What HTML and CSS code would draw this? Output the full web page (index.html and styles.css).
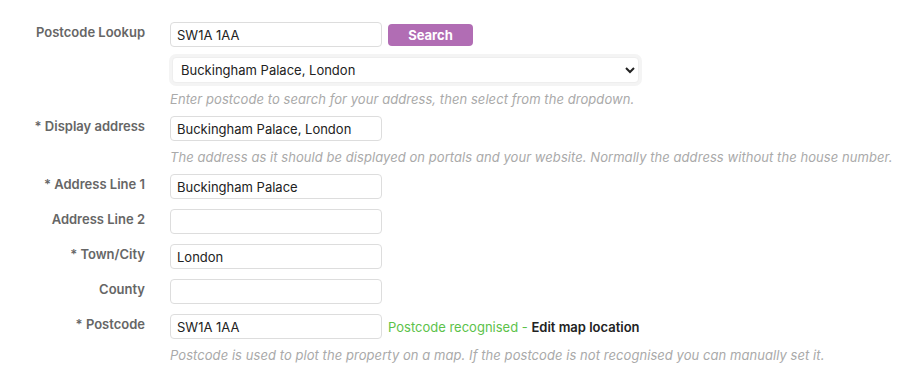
FILE: index.html
```html
<!DOCTYPE html>
<html lang="en">
<head>
    <meta charset="UTF-8">
    <title>Property address</title>
    <link rel="stylesheet" href="styles.css">
</head>
<body>
    <div class="form">
        <div class="row">
            <label for="lookup">Postcode Lookup</label>
            <div class="field">
                <div class="inline">
                    <input type="text" id="lookup" value="SW1A 1AA">
                    <button type="button">Search</button>
                </div>
                <select class="address-select">
                    <option>Buckingham Palace, London</option>
                </select>
                <p class="help">Enter postcode to search for your address, then select from the dropdown.</p>
            </div>
        </div>

        <div class="row">
            <label for="display">* Display address</label>
            <div class="field">
                <input type="text" id="display" value="Buckingham Palace, London">
                <p class="help">The address as it should be displayed on portals and your website. Normally the address without the house number.</p>
            </div>
        </div>

        <div class="row">
            <label for="line1">* Address Line 1</label>
            <div class="field"><input type="text" id="line1" value="Buckingham Palace"></div>
        </div>

        <div class="row">
            <label for="line2">Address Line 2</label>
            <div class="field"><input type="text" id="line2"></div>
        </div>

        <div class="row">
            <label for="town">* Town/City</label>
            <div class="field"><input type="text" id="town" value="London"></div>
        </div>

        <div class="row">
            <label for="county">County</label>
            <div class="field"><input type="text" id="county"></div>
        </div>

        <div class="row">
            <label for="postcode">* Postcode</label>
            <div class="field">
                <div class="inline">
                    <input type="text" id="postcode" value="SW1A 1AA">
                    <span class="status"><span class="ok">Postcode recognised -</span> <a href="#">Edit map location</a></span>
                </div>
                <p class="help">Postcode is used to plot the property on a map. If the postcode is not recognised you can manually set it.</p>
            </div>
        </div>
    </div>
</body>
</html>
```

FILE: styles.css
```css
body {
    margin: 0;
    padding: 0;
    background: #fff;
    font-family: "Inter", "Liberation Sans", sans-serif;
    font-size: 13px;
    color: #222;
}
.form {
    padding-top: 22px;
}
.row {
    display: grid;
    grid-template-columns: 145px 1fr;
    column-gap: 25px;
    margin-bottom: 10px;
}
.row label {
    text-align: right;
    font-weight: 600;
    color: #666;
    line-height: 17px;
    padding-top: 2px;
}
.inline {
    display: flex;
    align-items: center;
    gap: 6px;
}
input {
    box-sizing: border-box;
    width: 212px;
    height: 25px;
    padding: 0 6px;
    border: 1px solid #ddd;
    border-radius: 4px;
    font-family: inherit;
    font-size: 13px;
    color: #222;
}
button {
    height: 22px;
    width: 85px;
    border: none;
    border-radius: 4px;
    background-color: #b16db4;
    color: white;
    font-family: inherit;
    font-size: 13px;
    font-weight: bold;
    cursor: pointer;
}
.address-select {
    display: block;
    box-sizing: border-box;
    width: 467px;
    height: 26px;
    margin-top: 10px;
    margin-left: 2px;
    padding: 0 4px;
    border: 1px solid #eee;
    border-radius: 4px;
    box-shadow: 0 0 0 3px #f4f4f4;
    background: #fff;
    font-family: inherit;
    font-size: 13px;
    color: #222;
}
.help {
    margin: 8px 0 -2px;
    line-height: 17px;
    color: #aaa;
    font-style: italic;
    letter-spacing: 0.06px;
}
.status .ok {
    color: #5cc24a;
}
.status a {
    color: #222;
    font-weight: 600;
    text-decoration: none;
}
```
